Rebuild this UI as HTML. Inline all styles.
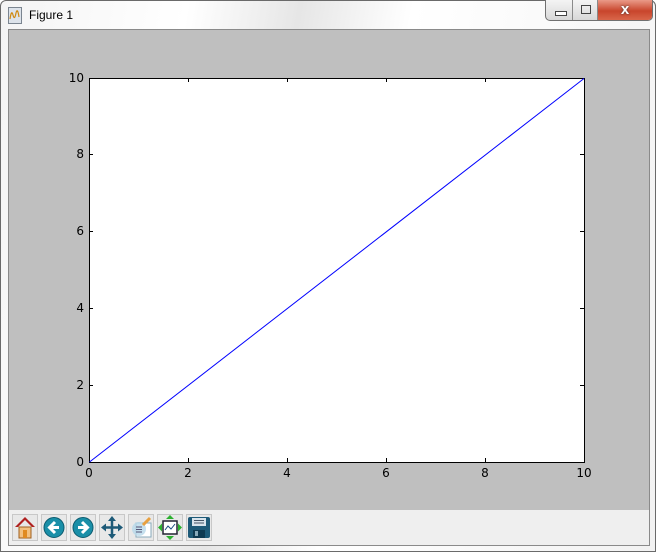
<!DOCTYPE html>
<html><head><meta charset="utf-8"><style>
body{margin:0;width:656px;height:552px;overflow:hidden;background:#fff;font-family:"Liberation Sans","DejaVu Sans",sans-serif;}
.win{position:absolute;left:0;top:0;width:654px;height:550px;border:1px solid #6a6a6a;border-radius:6px 6px 0 0;background:linear-gradient(100deg,#f4f4f4 0%,#fff 25%,#e6e6e6 40%,#fff 55%,#f2f2f2 100%);}
.client{position:absolute;left:7px;top:28px;width:640px;height:515px;border:1px solid #8a8a8a;background:#bfbfbf;}
.tb{position:absolute;left:0;top:480px;width:640px;height:35px;background:#efefef;}
.btn{position:absolute;top:4px;width:26px;height:27px;border:1px solid #c8c8c8;background:#e8e8e8;box-sizing:border-box;}
.title{position:absolute;left:28px;top:7px;font-size:12px;color:#000;}
</style></head><body>
<div class="win">
<svg style="position:absolute;left:7px;top:6px" width="14" height="17"><rect x="0.5" y="0.5" width="13" height="16" fill="#dde3ea" stroke="#7b8590"/><path d="M2 12 Q3.5 2 5 8 Q6.5 14 8 6 Q9.5 0 11 10" fill="none" stroke="#d08a10" stroke-width="1.2"/></svg>
<div class="title">Figure 1</div>
<div style="position:absolute;left:544px;top:-1px;width:106px;height:20px;border:1px solid #707070;border-top:none;border-radius:0 0 5px 5px;overflow:hidden;background:linear-gradient(#f4f4f4,#d8d8d8);">
 <div style="position:absolute;left:0;top:0;width:26px;height:20px;border-right:1px solid #8a8a8a"></div>
 <div style="position:absolute;left:9px;top:11px;width:10px;height:3px;border:1px solid #444;background:#fff"></div>
 <div style="position:absolute;left:27px;top:0;width:24px;height:20px;border-right:1px solid #8a8a8a"></div>
 <div style="position:absolute;left:35px;top:5px;width:8px;height:7px;border:1px solid #444;"></div>
 <div style="position:absolute;left:52px;top:0;width:54px;height:20px;background:linear-gradient(#e99a88,#c8452c 55%,#d9664a);"></div>
 <div style="position:absolute;left:52px;top:1px;width:54px;text-align:center;color:#fff;font-weight:bold;font-size:15px;text-shadow:0 0 2px #333">x</div>
</div>
<div class="client">
<svg style="position:absolute;left:-9px;top:-30px" width="656" height="552">
<rect x="89.5" y="78.5" width="495" height="384" fill="#fff" stroke="#000"/>
<line x1="89.5" y1="462" x2="584" y2="78.5" stroke="#0000ff" stroke-width="1"/>
<g stroke="#000">
<path d="M188.5 78v4M287.5 78v4M386.5 78v4M485.5 78v4M188.5 462v-4M287.5 462v-4M386.5 462v-4M485.5 462v-4"/>
<path d="M89 385.5h4M89 308.5h4M89 231.5h4M89 154.5h4M584 385.5h-4M584 308.5h-4M584 231.5h-4M584 154.5h-4"/>
</g>
<g font-family="DejaVu Sans,Liberation Sans,sans-serif" font-size="12" fill="#000">
<g text-anchor="middle">
<text x="89" y="477">0</text><text x="188" y="477">2</text><text x="287" y="477">4</text><text x="386" y="477">6</text><text x="485" y="477">8</text><text x="584" y="477">10</text>
</g>
<g text-anchor="end">
<text x="84" y="466">0</text><text x="84" y="389">2</text><text x="84" y="312">4</text><text x="84" y="235">6</text><text x="84" y="158">8</text><text x="84" y="82">10</text>
</g>
</g>
</svg>
<div class="tb">
 <div class="btn" style="left:3px"><svg width="24" height="25"><path d="M12 2 L2 12 L5 12 L12 5 L19 12 L22 12Z" fill="#b02020"/><rect x="6" y="12" width="12" height="11" fill="#f2c080" stroke="#a06020"/><rect x="10" y="15" width="4" height="8" fill="#e08a20"/></svg></div>
 <div class="btn" style="left:32px"><svg width="24" height="25"><circle cx="12" cy="12.5" r="10" fill="#1a8fa8" stroke="#0c5c70"/><path d="M13 7 L7.5 12.5 L13 18 M8 12.5 H17" stroke="#fff" stroke-width="3" fill="none"/></svg></div>
 <div class="btn" style="left:61px"><svg width="24" height="25"><circle cx="12" cy="12.5" r="10" fill="#1a8fa8" stroke="#0c5c70"/><path d="M11 7 L16.5 12.5 L11 18 M16 12.5 H7" stroke="#fff" stroke-width="3" fill="none"/></svg></div>
 <div class="btn" style="left:90px"><svg width="24" height="25"><path d="M12 3V22M3 12.5H21" stroke="#1d5a78" stroke-width="2.5"/><path d="M12 1l4 5h-8zM12 24l4-5h-8zM1 12.5l5-4v8zM23 12.5l-5-4v8z" fill="#1d5a78"/></svg></div>
 <div class="btn" style="left:119px"><svg width="24" height="25"><rect x="7" y="8" width="15" height="14" fill="#fff" stroke="#8ab"/><circle cx="10" cy="14" r="7" fill="#b8d8ea" opacity=".8"/><path d="M7 12h6M7 14.5h6M7 17h6" stroke="#557"/><path d="M14 10 L21 3" stroke="#e8a040" stroke-width="3"/></svg></div>
 <div class="btn" style="left:148px"><svg width="24" height="25"><rect x="5" y="6" width="14" height="13" fill="#fff" stroke="#223" stroke-width="1.5"/><path d="M7 15 L10 11 L13 14 L17 9" stroke="#1a4a80" fill="none"/><path d="M12 0l4 4h-8zM12 25l4-4h-8zM0 12.5l4-4v8zM24 12.5l-4-4v8z" fill="#2cb030"/></svg></div>
 <div class="btn" style="left:177px"><svg width="24" height="25"><rect x="1" y="2" width="22" height="21" rx="2" fill="#1d5a78"/><rect x="5" y="3" width="14" height="8" fill="#d8e4ec"/><path d="M7 5.5h10M7 8h10" stroke="#456"/><rect x="6" y="15" width="12" height="8" fill="#0e3a52"/><rect x="8" y="16" width="3" height="5" fill="#8ab"/></svg></div>
</div>
</div>
</div>
</body></html>
